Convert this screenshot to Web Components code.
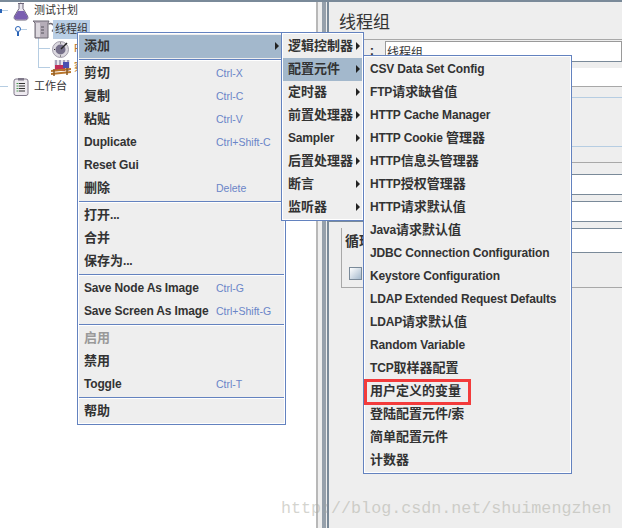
<!DOCTYPE html>
<html>
<head>
<meta charset="utf-8">
<title>JMeter</title>
<style>
  html, body { margin: 0; height: 100%; overflow: hidden; background: #eee; }
  body { font-family: "Liberation Sans", "Noto Sans CJK SC", sans-serif; }
</style>
</head>
<body>
<jm-app></jm-app>

<script>
// wrap CJK runs, the Java font draws them 1px bigger than the latin text
const wrapCjk = (s) => s.replace(/[\u4e00-\u9fff]+/g, (m) => `<span class="cjk">${m}</span>`);

const ICONS = {
  flask: `<svg width="16" height="20" viewBox="0 0 16 20">
    <path d="M5 2.500h6M6 2.500v5L1.500 15c-1 2 0 4 2 4h9c2 0 3-2 2-4L10 7.500v-5" fill="#e9e6ee" stroke="#6b6478"/>
    <path d="M5 10h6l3.500 5.500c.5 1.500-.5 3-2 3h-9c-1.500 0-2.500-1.500-2-3z" fill="#7a5fb0"/>
    <path d="M7 1l4-1" stroke="#8a8494"/>
  </svg>`,
  beaker: `<svg width="23" height="19" viewBox="0 0 23 19">
    <path d="M1 1h16l-1 2v15H3V3z" fill="#b5adb8" stroke="#6f6a74"/>
    <path d="M4 3h4v14H4z" fill="#dcd8de"/>
    <path d="M16.500 4c3-1 5.500 0 5.500 3.500 0 2-1 3-2 4" fill="none" stroke="#6f6a74" stroke-width="1.500"/>
    <path d="M9 7h3M9 10h3M9 13h3" stroke="#55505a"/>
  </svg>`,
  gauge: `<svg width="18" height="18" viewBox="0 0 18 18">
    <circle cx="8.500" cy="9.500" r="8" fill="#dcd9e0" stroke="#a29daa"/>
    <circle cx="8.500" cy="9.500" r="5" fill="#76708a"/>
    <path d="M9 9l6-6" stroke="#222" stroke-width="1.500"/>
    <path d="M8.500 2.500v1M2 9.500h1M8.500 15.500v1" stroke="#333"/>
  </svg>`,
  rack: `<svg width="20" height="17" viewBox="0 0 20 17">
    <path d="M5 1v11M9 1v11M13 1v11M17 1v11" stroke="#a8a4bc" stroke-width="2.500"/>
    <path d="M4 6h10v6H4z" fill="#c22f58"/>
    <path d="M12 3h6v6h-6z" fill="#4a50b0"/>
    <path d="M0 12l20-2M0 15l20-2" stroke="#b8762c" stroke-width="2"/>
    <path d="M3 10v7M16 9v7" stroke="#8a5a20" stroke-width="1.500"/>
  </svg>`,
  board: `<svg width="16" height="19" viewBox="0 0 16 19">
    <rect x="1" y="2" width="14" height="16.500" rx="2" fill="#eeeaf0" stroke="#7e7788"/>
    <path d="M5 1h6v2.500H5z" fill="#7e7788"/>
    <path d="M6 6.500h6M6 9h6M6 11.500h6M6 14h6" stroke="#333"/>
    <path d="M3.500 6.500h2M3.500 9h2M3.500 11.500h2M3.500 14h2" stroke="#4f9a55"/>
  </svg>`
};

class TreeRow extends HTMLElement {
  constructor() {
    super();
    this.attachShadow({ mode: 'open' });
    const a = (n, d) => this.getAttribute(n) || d;
    const icon = ICONS[a('icon')];
    this.shadowRoot.innerHTML = `
      <style>
        :host { display: flex; align-items: center; height: 19px; position: relative;
          padding-left: ${a('icon-x', 0)}px; font-size: 11px; color: #333; }
        .icon { width: ${a('icon-w', 16)}px; display: flex; margin-right: ${a('gap', 5)}px; }
        :host([selected]) .label { background: #b9cfe6; }
        .label { padding: 3px 2px; line-height: 13px; white-space: nowrap; }
        /* the popup covers the rest of these names */
        :host([clip]) .label { width: 3px; padding: 3px 0; overflow: hidden; color: #b8762c; }
        .stub { position: absolute; left: ${a('stub-x', 0)}px; top: 9px; width: ${a('stub-w', 8)}px; height: 1px; background: #b6cde2; }
      </style>
      <div class="stub"></div>
      <div class="icon">${icon}</div>
      <div class="label"><slot></slot></div>`;
  }
}
customElements.define('tree-row', TreeRow);

class MenuItem extends HTMLElement {
  constructor() {
    super();
    this.attachShadow({ mode: 'open' });
    const label = this.getAttribute('label');
    const key = this.getAttribute('key') || '';
    this.shadowRoot.innerHTML = `
      <style>
        :host { display: flex; align-items: center; box-sizing: border-box; height: 23px; position: relative;
          padding: 0 0 2px 5px; font-size: 12px; font-weight: 700; color: #333; white-space: nowrap; }
        :host([active]) { background: #a3b8cc; }
        :host([disabled]) { color: #999; }
        .cjk { font-size: 13px; letter-spacing: 0; line-height: 1; }
        .label { flex: none; width: var(--label-width, auto); letter-spacing: -.16px; }
        .key { font-size: 10.500px; font-weight: 400; color: #6a85c8; }
        .arrow { position: absolute; right: var(--arrow-right, 4px); top: 7px; width: 0; height: 0;
          border-left: 4px solid #222; border-top: 4px solid transparent; border-bottom: 4px solid transparent; }
      </style>
      <span class="label">${wrapCjk(label)}</span>
      <span class="key">${key}</span>
      ${this.hasAttribute('arrow') ? '<span class="arrow"></span>' : ''}`;
  }
}
customElements.define('menu-item', MenuItem);

class MenuSep extends HTMLElement {
  constructor() {
    super();
    this.attachShadow({ mode: 'open' });
    this.shadowRoot.innerHTML = `
      <style>
        :host { display: block; height: 4px; overflow: hidden; }
        div { margin-top: 1px; height: 1px; background: #6382bf; border-bottom: 1px solid #fff; }
      </style>
      <div></div>`;
  }
}
customElements.define('menu-sep', MenuSep);

class PopupMenu extends HTMLElement {
  constructor() {
    super();
    this.attachShadow({ mode: 'open' });
    this.shadowRoot.innerHTML = `
      <style>
        :host { display: block; position: absolute; box-sizing: border-box; background: #eee;
          border: 1px solid #6382bf; box-shadow: inset 0 0 0 1px #fff; padding: 2px 1px 1px; }
      </style>
      <slot></slot>`;
  }
}
customElements.define('popup-menu', PopupMenu);

class WhiteField extends HTMLElement {
  constructor() {
    super();
    this.attachShadow({ mode: 'open' });
    this.shadowRoot.innerHTML = `
      <style>
        :host { display: block; box-sizing: border-box; background: #fff; border: solid #7a8a99; border-width: 1px 0; }
      </style>
      <slot></slot>`;
  }
}
customElements.define('white-field', WhiteField);

class JmApp extends HTMLElement {
  constructor() {
    super();
    this.attachShadow({ mode: 'open' });
    this.shadowRoot.innerHTML = `
      <style>
        :host { display: block; position: relative; width: 622px; height: 528px; overflow: hidden;
          background: #eee; border-top: 2px solid #7a8a99; box-sizing: border-box; color: #333;
          font-family: "Liberation Sans", "Noto Sans CJK SC", sans-serif; }
        .main { display: flex; height: 100%; }
        .tree { width: 316px; flex: none; background: #fff; border-right: 2px solid #b8b8b8; position: relative; }
        .rows { margin-top: -1px; }
        .v { position: absolute; left: 38px; top: 36px; width: 1px; height: 29px; background: #b6cde2; }
        .knob { position: absolute; left: 15px; top: 24px; width: 4px; height: 4px;
          border: 1px solid #2a64b8; border-radius: 50%; background: #fff; }
        .stem { position: absolute; left: 17px; top: 30px; width: 2px; height: 4px; background: #2a64b8; }
        .dot { position: absolute; left: 0; top: 7px; width: 2px; height: 4px; background: #2a64b8; }
        .split { width: 4px; margin-left: 4px; flex: none;
          background-image: radial-gradient(#8f9aa6 .7px, transparent .8px); background-size: 2px 2px; }
        .edge { width: 2px; margin-left: 1px; flex: none; background: #7a8a99; }
        .right { flex: 1; min-width: 0; }
        .title { font-size: 17px; height: 38px; box-sizing: border-box; padding: 11px 0 0 10px; line-height: 20px;
          border-bottom: 1px solid #a8a8a8; }
        .name { display: flex; margin-top: 1px; height: 21px; }
        .colon { width: 56px; text-align: right; font-size: 13px; font-weight: 700; padding: 2px 11px 0 0; box-sizing: border-box; }
        .input { flex: 1; box-sizing: border-box; background: #fff; border: 1px solid #9a9a9a;
          border-bottom-color: #7a8a99; font-size: 12px; padding: 1px 0 0 1px; }
        .f1 { margin-top: 6px; height: 18px; background: #fff; border-bottom: 1px solid #a8a8a8; }
        .blue { height: 48px; margin-top: 10px; border: solid #b6cde2; border-width: 1px 0; }
        .g { height: 15px; border-bottom: 1px solid #a8a8a8; }
        .f2 { margin-top: 11px; height: 21px; }
        .f3 { margin-top: 6px; height: 21px; }
        .box { margin: 6px 0 0 12px; height: 60px; box-sizing: border-box; border: solid #a8a8a8; border-width: 0 0 1px 1px;
          position: relative; padding: 6px 0 0 3px; }
        .f4 { position: absolute; left: 44px; right: 0; top: 0; height: 25px; }
        .loop { font-size: 14px; font-weight: 700; line-height: 15px; height: 15px; white-space: nowrap; }
        .check { width: 13px; height: 13px; box-sizing: border-box; margin: 18px 0 0 4px; border: 1px solid #7a8a99;
          background: linear-gradient(135deg, #fff, #a3b8cc); }
        .mark { position: absolute; left: 281px; top: 497px; font: 16.700px/20px "Liberation Mono", monospace;
          color: rgba(170,170,160,.5); white-space: nowrap; }
        .hit { position: absolute; left: 364px; top: 377px; width: 107px; height: 26px; box-sizing: border-box;
          border: 3px solid #f33b3b; }
        .m0 { left: 77px; top: 30px; width: 209px; height: 393px; --arrow-right: 5px; --label-width: 132px; }
        .m1 { left: 281px; top: 30px; width: 83px; height: 189px; --arrow-right: 2px; }
        .m2 { left: 363px; top: 53px; width: 209px; height: 419px; }
      </style>
      <div class="main">
        <div class="tree">
          <div class="v"></div>
          <div class="rows">
            <tree-row icon="flask" icon-x="13" gap="3" stub-x="2" stub-w="6">测试计划</tree-row>
            <tree-row icon="beaker" icon-x="32" icon-w="23" gap="-2" stub-x="21" stub-w="6" selected>线程组</tree-row>
            <tree-row icon="gauge" icon-x="52" icon-w="18" gap="4" stub-x="38" stub-w="12" clip>R</tree-row>
            <tree-row icon="rack" icon-x="51" icon-w="20" gap="3" stub-x="38" stub-w="12" clip>察</tree-row>
            <tree-row icon="board" icon-x="13" gap="3" stub-x="0" stub-w="8">工作台</tree-row>
          </div>
          <div class="dot"></div>
          <div class="knob"></div>
          <div class="stem"></div>
        </div>
        <div class="split"></div>
        <div class="edge"></div>
        <div class="right">
          <div class="title">线程组</div>
          <div class="name"><div class="colon">:</div><div class="input">线程组</div></div>
          <div class="f1"></div>
          <div class="blue"></div>
          <div class="g"></div>
          <white-field class="f2"></white-field>
          <white-field class="f3"></white-field>
          <div class="box">
            <white-field class="f4"></white-field>
            <div class="loop">循环</div>
            <div class="check"></div>
          </div>
        </div>
      </div>

      <popup-menu class="m0">
        <menu-item label="添加" active arrow></menu-item>
        <menu-sep></menu-sep>
        <menu-item label="剪切" key="Ctrl-X"></menu-item>
        <menu-item label="复制" key="Ctrl-C"></menu-item>
        <menu-item label="粘贴" key="Ctrl-V"></menu-item>
        <menu-item label="Duplicate" key="Ctrl+Shift-C"></menu-item>
        <menu-item label="Reset Gui"></menu-item>
        <menu-item label="删除" key="Delete"></menu-item>
        <menu-sep></menu-sep>
        <menu-item label="打开..."></menu-item>
        <menu-item label="合并"></menu-item>
        <menu-item label="保存为..."></menu-item>
        <menu-sep></menu-sep>
        <menu-item label="Save Node As Image" key="Ctrl-G"></menu-item>
        <menu-item label="Save Screen As Image" key="Ctrl+Shift-G"></menu-item>
        <menu-sep></menu-sep>
        <menu-item label="启用" disabled></menu-item>
        <menu-item label="禁用"></menu-item>
        <menu-item label="Toggle" key="Ctrl-T"></menu-item>
        <menu-sep></menu-sep>
        <menu-item label="帮助"></menu-item>
      </popup-menu>

      <popup-menu class="m1">
        <menu-item label="逻辑控制器" arrow></menu-item>
        <menu-item label="配置元件" active arrow></menu-item>
        <menu-item label="定时器" arrow></menu-item>
        <menu-item label="前置处理器" arrow></menu-item>
        <menu-item label="Sampler" arrow></menu-item>
        <menu-item label="后置处理器" arrow></menu-item>
        <menu-item label="断言" arrow></menu-item>
        <menu-item label="监听器" arrow></menu-item>
      </popup-menu>

      <popup-menu class="m2">
        <menu-item label="CSV Data Set Config"></menu-item>
        <menu-item label="FTP请求缺省值"></menu-item>
        <menu-item label="HTTP Cache Manager"></menu-item>
        <menu-item label="HTTP Cookie 管理器"></menu-item>
        <menu-item label="HTTP信息头管理器"></menu-item>
        <menu-item label="HTTP授权管理器"></menu-item>
        <menu-item label="HTTP请求默认值"></menu-item>
        <menu-item label="Java请求默认值"></menu-item>
        <menu-item label="JDBC Connection Configuration"></menu-item>
        <menu-item label="Keystore Configuration"></menu-item>
        <menu-item label="LDAP Extended Request Defaults"></menu-item>
        <menu-item label="LDAP请求默认值"></menu-item>
        <menu-item label="Random Variable"></menu-item>
        <menu-item label="TCP取样器配置"></menu-item>
        <menu-item label="用户定义的变量"></menu-item>
        <menu-item label="登陆配置元件/索"></menu-item>
        <menu-item label="简单配置元件"></menu-item>
        <menu-item label="计数器"></menu-item>
      </popup-menu>

      <div class="hit"></div>
      <div class="mark">http://blog.csdn.net/shuimengzhen</div>`;
  }
}
customElements.define('jm-app', JmApp);
</script>
</body>
</html>
